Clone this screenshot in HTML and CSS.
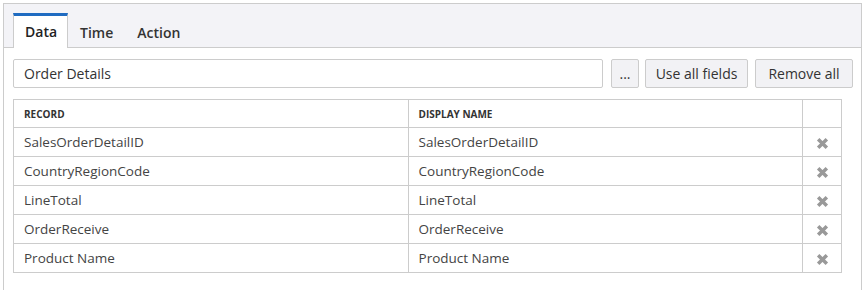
FILE: index.html
```html
<!DOCTYPE html>
<html>
    <head>
        <meta charset="utf-8">
        <link rel="stylesheet" href="styles.css">
    </head>
    <body>
        <!--panel starts-->
        <div class="panel">
            <div class="tabs">
                <div class="tab active">Data</div>
                <div class="tab">Time</div>
                <div class="tab">Action</div>
            </div>

            <div class="content">
                <div class="toolbar">
                    <input type="text" class="name-input" value="Order Details">
                    <button class="btn btn-dots">...</button>
                    <button class="btn btn-use">Use all fields</button>
                    <button class="btn btn-remove">Remove all</button>
                </div>

                <table class="fields">
                    <thead>
                        <tr>
                            <th class="col-record">Record</th>
                            <th class="col-display">Display name</th>
                            <th class="col-remove"></th>
                        </tr>
                    </thead>
                    <tbody>
                        <tr><td>SalesOrderDetailID</td><td>SalesOrderDetailID</td><td class="remove"><svg class="x-icon" viewBox="0 0 12 12"><path d="M2 2 L10 10 M10 2 L2 10"/></svg></td></tr>
                        <tr><td>CountryRegionCode</td><td>CountryRegionCode</td><td class="remove"><svg class="x-icon" viewBox="0 0 12 12"><path d="M2 2 L10 10 M10 2 L2 10"/></svg></td></tr>
                        <tr><td>LineTotal</td><td>LineTotal</td><td class="remove"><svg class="x-icon" viewBox="0 0 12 12"><path d="M2 2 L10 10 M10 2 L2 10"/></svg></td></tr>
                        <tr><td>OrderReceive</td><td>OrderReceive</td><td class="remove"><svg class="x-icon" viewBox="0 0 12 12"><path d="M2 2 L10 10 M10 2 L2 10"/></svg></td></tr>
                        <tr><td>Product Name</td><td>Product Name</td><td class="remove"><svg class="x-icon" viewBox="0 0 12 12"><path d="M2 2 L10 10 M10 2 L2 10"/></svg></td></tr>
                    </tbody>
                </table>
            </div>
        </div>
        <!--panel ends-->
    </body>
</html>
```

FILE: styles.css
```css
* {box-sizing: border-box}

body {
  margin: 0;
  background: #fff;
  font-family: "Open Sans", "Noto Sans", sans-serif;
  font-size: 13px;
  color: #333;
}

/* outer panel */
.panel {
  margin: 3px 0 0 3px;
  width: 859px;
  height: 300px;
  border: 1px solid #ccc;
  border-bottom: none;
}

/* tab bar */
.tabs {
  display: flex;
  height: 44px;
  padding: 9px 0 0 9px;
  background: #f3f3f7;
  border-bottom: 1px solid #ccc;
}

.tab {
  padding: 0 12px;
  height: 34px;
  line-height: 36px;
  font-size: 14px;
  font-weight: 600;
  color: #333;
  border-top: 2px solid transparent;
}

.tab.active {
  padding: 0 10px 0 11px;
  background: #fff;
  border-top: 3px solid #1f6bc1;
  border-left: 1px solid #ccc;
  border-right: 1px solid #ccc;
  height: 35px;
  line-height: 32px;
  color: #222;
}

/* content */
.content {
  padding: 11px 9px 0 9px;
}

.toolbar {
  display: flex;
  height: 29px;
}

.name-input {
  flex: none;
  width: 590px;
  height: 29px;
  padding: 0 10px;
  border: 1px solid #ccc;
  border-radius: 2px;
  font-family: inherit;
  font-size: 14px;
  color: #333;
  outline: none;
}

.btn {
  flex: none;
  height: 29px;
  margin-left: 7px;
  padding: 0;
  background: #f2f2f5;
  border: 1px solid #ccc;
  border-radius: 2px;
  font-family: inherit;
  font-size: 14px;
  color: #333;
  white-space: nowrap;
}

.btn-dots {
  margin-left: 8px;
  width: 28px;
}

.btn-use {
  margin-left: 6px;
  width: 103px;
}

.btn-remove {
  width: 98px;
}

/* fields table */
.fields {
  margin-top: 11px;
  width: 829px;
  border-collapse: collapse;
}

.fields th, .fields td {
  border: 1px solid #ccc;
  padding: 0 10px;
  text-align: left;
  height: 29px;
}

.fields th {
  height: 28px;
  font-size: 10px;
  font-weight: 700;
  text-transform: uppercase;
  color: #333;
}

.fields td {
  font-size: 13.5px;
  color: #444;
}

.col-record, .col-display {
  width: 395px;
}

.col-remove {
  width: 39px;
}

.fields td.remove {
  padding: 0;
  text-align: center;
}

.x-icon {
  width: 13px;
  height: 13px;
  vertical-align: middle;
  stroke: #999;
  stroke-width: 3.2;
  fill: none;
}
```
